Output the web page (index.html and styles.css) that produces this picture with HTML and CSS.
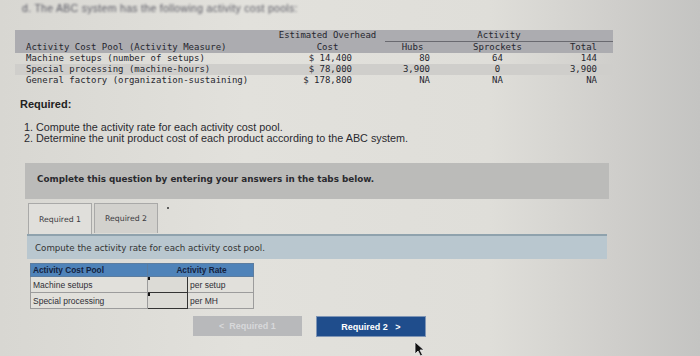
FILE: index.html
```html
<!DOCTYPE html>
<html lang="en">
<head>
<meta charset="utf-8">
<title>ABC activity rates</title>
<link rel="stylesheet" href="styles.css">
</head>
<body>
<div class="sheet">
  <p class="blurb">d. The ABC system has the following activity cost pools:</p>

  <table class="data">
    <colgroup>
      <col class="c1"><col class="c2"><col class="c3"><col class="c4"><col class="c5">
    </colgroup>
    <tr class="head">
      <td></td>
      <td class="ctr">Estimated Overhead</td>
      <td colspan="3" class="ctr act">Activity</td>
    </tr>
    <tr class="head">
      <td class="pool">Activity Cost Pool (Activity Measure)</td>
      <td class="ctr">Cost</td>
      <td class="ctr">Hubs</td>
      <td class="ctr">Sprockets</td>
      <td class="tot">Total</td>
    </tr>
    <tr>
      <td class="pool">Machine setups (number of setups)</td>
      <td class="cost">$ 14,400</td>
      <td class="hub">80</td>
      <td class="ctr">64</td>
      <td class="tot">144</td>
    </tr>
    <tr class="stripe">
      <td class="pool">Special processing (machine-hours)</td>
      <td class="cost">$ 78,000</td>
      <td class="hub">3,900</td>
      <td class="ctr">0</td>
      <td class="tot">3,900</td>
    </tr>
    <tr>
      <td class="pool">General factory (organization-sustaining)</td>
      <td class="cost">$ 178,800</td>
      <td class="hub">NA</td>
      <td class="ctr">NA</td>
      <td class="tot">NA</td>
    </tr>
  </table>

  <h3 class="req">Required:</h3>
  <ol class="steps">
    <li>Compute the activity rate for each activity cost pool.</li>
    <li>Determine the unit product cost of each product according to the ABC system.</li>
  </ol>

  <div class="notice">Complete this question by entering your answers in the tabs below.</div>

  <div class="tabs">
    <div class="tab active">Required 1</div>
    <div class="tab">Required 2</div>
    <span class="speck"></span>
  </div>
  <div class="band">Compute the activity rate for each activity cost pool.</div>

  <table class="rate">
    <colgroup><col class="r1"><col class="r2"><col class="r3"></colgroup>
    <tr class="rhead">
      <th>Activity Cost Pool</th>
      <th colspan="2" class="rc">Activity Rate</th>
    </tr>
    <tr>
      <td>Machine setups</td>
      <td class="inp"></td>
      <td>per setup</td>
    </tr>
    <tr>
      <td>Special processing</td>
      <td class="inp"></td>
      <td>per MH</td>
    </tr>
  </table>

  <div class="nav">
    <div class="btn prev">&lt;&nbsp;&nbsp;Required 1</div>
    <div class="btn next">Required 2&nbsp;&nbsp;&nbsp;&gt;</div>
  </div>

  <svg class="cursor" width="12" height="16" viewBox="0 0 12 16">
    <path d="M1 1 L1 13 L4 10 L6.5 15 L8.5 14 L6 9 L10 9 Z" fill="#111" stroke="#eee" stroke-width="0.8"/>
  </svg>
</div>
</body>
</html>
```

FILE: styles.css
```css
html, body {
  margin: 0;
  padding: 0;
}
body {
  width: 700px;
  height: 356px;
  overflow: hidden;
  background: linear-gradient(to right, #d8d7d2 0%, #e2e1dc 35%, #dfded9 70%, #cfcecb 88%, #c4c4c2 100%);
  font-family: "Liberation Sans", Arial, sans-serif;
  color: #2a2a2e;
}
.sheet {
  position: relative;
  height: 356px;
  overflow: hidden;
}
.blurb {
  margin: 2px 0 0 22px;
  height: 13px;
  font-size: 10.5px;
  line-height: 12px;
  color: #5a5a64;
  filter: blur(1px);
  letter-spacing: 0.3px;
}

/* data table */
.data {
  margin: 15px 0 0 15px;
  width: 598px;
  border-collapse: collapse;
  table-layout: fixed;
  font-family: "DejaVu Sans Mono", "Liberation Mono", monospace;
  font-size: 9px;
  line-height: 11px;
  color: #26262e;
}
.data .c1 { width: 255px; }
.data .c2 { width: 115px; }
.data .c3 { width: 55px; }
.data .c4 { width: 115px; }
.data .c5 { width: 58px; }
.data td {
  padding: 0;
  height: 11px;
  white-space: nowrap;
}
.data .head td {
  background: #acacb0;
}
.data .act {
  border-bottom: 1px solid #6a6a70;
}
.data .stripe td {
  background: #cfcecb;
}
.data .pool { padding-left: 11px; }
.data .ctr { text-align: center; }
.data .cost { text-align: right; padding-right: 33px; }
.data .hub { text-align: right; padding-right: 10px; }
.data .tot { text-align: right; padding-right: 16px; }

/* required */
.req {
  margin: 11px 0 0 20px;
  font-size: 11px;
  line-height: 14px;
  font-weight: bold;
  color: #222;
}
.steps {
  margin: 11px 0 0 24px;
  padding: 0;
  list-style-position: inside;
  font-size: 10.8px;
  line-height: 11px;
  color: #2a2a30;
}

/* notice */
.notice {
  margin: 19px 0 0 25px;
  width: 572px;
  height: 32px;
  padding: 0 0 4px 12px;
  display: flex;
  align-items: center;
  background: #bbbbb9;
  font-family: "DejaVu Sans", Verdana, sans-serif;
  font-size: 8.8px;
  font-weight: bold;
  color: #2a2a2e;
}

/* tabs */
.tabs {
  display: flex;
  margin: 4px 0 0 28px;
  height: 31px;
}
.tab {
  width: 62px;
  height: 29px;
  border: 1px solid #a9a9a8;
  border-bottom: none;
  background: #d2d1cd;
  display: flex;
  align-items: center;
  justify-content: center;
  font-family: "DejaVu Sans", Verdana, sans-serif;
  font-size: 7.8px;
  color: #3a3a40;
  box-sizing: content-box;
}
.tab.active {
  background: #e0dfdb;
  height: 30px;
}
.tab + .tab {
  margin-left: 2px;
}
.speck {
  width: 2px;
  height: 2px;
  border-radius: 50%;
  background: #333;
  margin: 4px 0 0 9px;
}

.band {
  margin-left: 27px;
  width: 572px;
  height: 23px;
  padding-left: 8px;
  border-top: 2px solid #8fa2ad;
  background: #b9c7cf;
  display: flex;
  align-items: center;
  font-family: "DejaVu Sans", Verdana, sans-serif;
  font-size: 8.7px;
  color: #333;
}

/* rate table */
.rate {
  margin: 4px 0 0 30px;
  width: 223px;
  border-collapse: collapse;
  table-layout: fixed;
  font-size: 8.5px;
  color: #2f2f36;
}
.rate .r1 { width: 117px; }
.rate .r2 { width: 40px; }
.rate .r3 { width: 66px; }
.rate th, .rate td {
  border: 1px solid #9c9c9c;
  padding: 0 0 0 2px;
  text-align: left;
  white-space: nowrap;
}
.rate .rhead th {
  height: 12px;
  background: #4f83b9;
  color: #14223f;
  font-weight: bold;
  font-size: 8.3px;
  border-color: #5c7da0;
}
.rate .rhead .rc {
  text-align: center;
}
.rate td {
  height: 15px;
  background: #e1e0db;
}
.rate td.inp {
  position: relative;
  border: 1px solid #333;
  background: #dcdbd6;
}
.rate td.inp::before {
  content: "";
  position: absolute;
  left: 0;
  top: 0;
  width: 2px;
  height: 3px;
  background: #111;
}

/* nav buttons */
.nav {
  display: flex;
  gap: 14px;
  margin: 7px 0 0 193px;
}
.btn {
  height: 20px;
  display: flex;
  align-items: center;
  justify-content: center;
  font-size: 9px;
  font-weight: bold;
}
.btn.prev {
  width: 109px;
  background: #b8b9bb;
  color: #d7d8da;
}
.btn.next {
  width: 108px;
  height: 19px;
  background: #1f4d8c;
  border: 1px solid #7f95b5;
  color: #fff;
}

.cursor {
  position: absolute;
  left: 414px;
  top: 341px;
}
```
